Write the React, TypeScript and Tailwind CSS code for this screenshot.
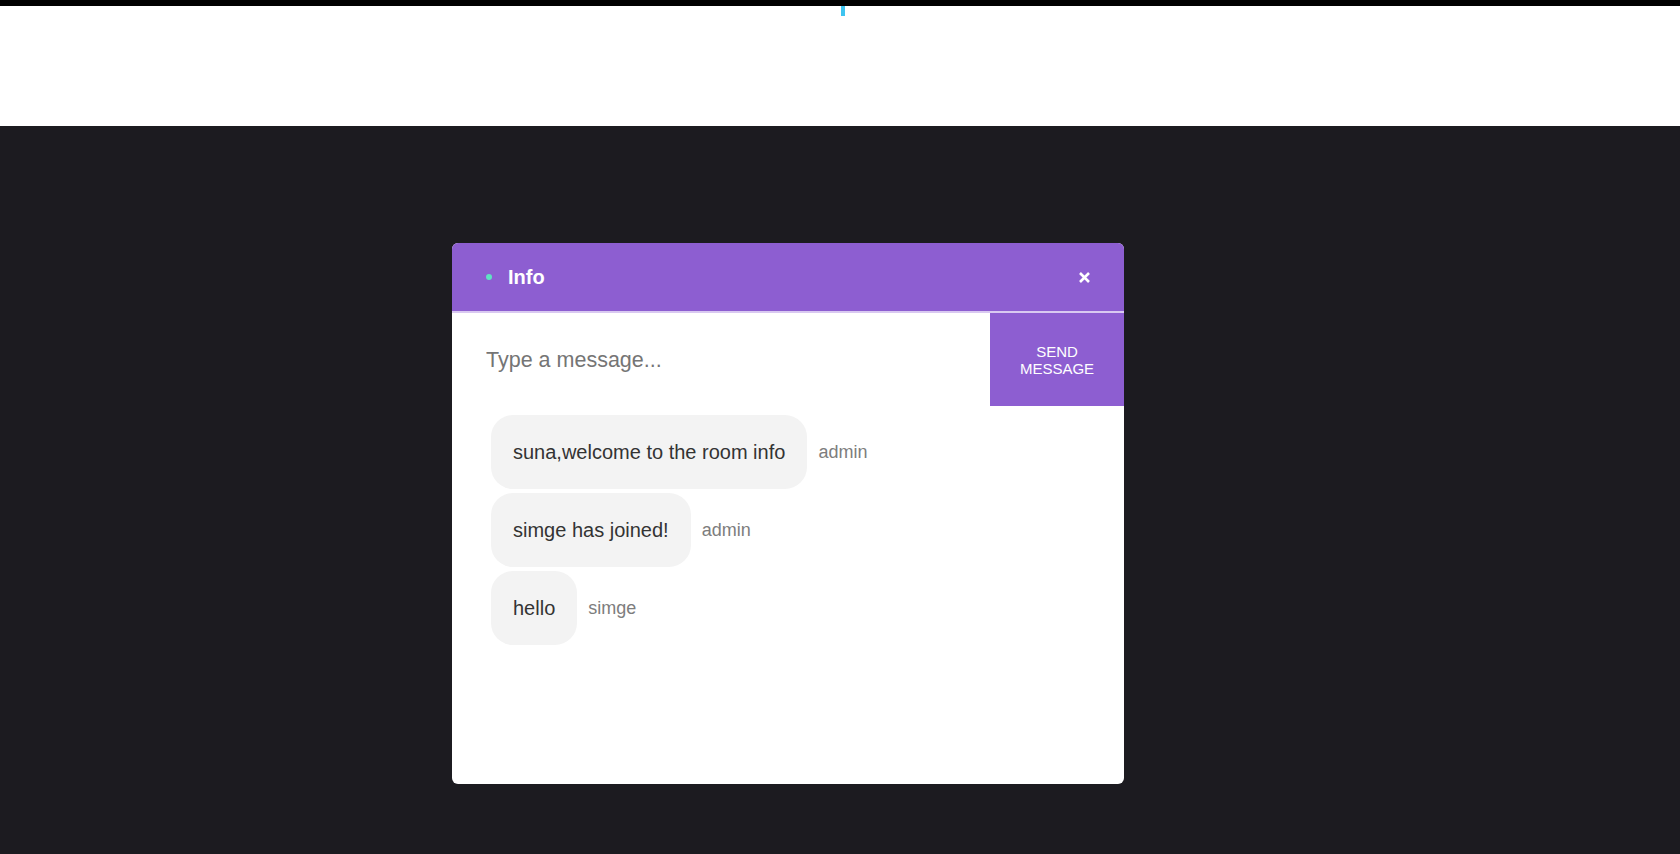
import React from 'react'

interface Message {
  text: string
  user: string
}

const messages: Message[] = [
  { text: 'suna,welcome to the room info', user: 'admin' },
  { text: 'simge has joined!', user: 'admin' },
  { text: 'hello', user: 'simge' },
]

function MessageRow({ message }: { message: Message }) {
  return (
    <div className="flex items-center gap-[11px]">
      <div className="rounded-[22px] bg-[#f3f3f3] px-[22px] py-[25px] text-[20px] leading-[24px] text-[#333333]">
        {message.text}
      </div>
      <span className="text-[18px] text-[#7d7d7d]">{message.user}</span>
    </div>
  )
}

export default function App() {
  return (
    <div className="min-h-screen bg-[#1c1b20]" style={{ fontFamily: '"Liberation Sans", Arial, sans-serif' }}>
      {/* top bar */}
      <div className="h-[126px] bg-white">
        <div className="h-[6px] bg-black" />
        <div className="ml-[841px] h-[10px] w-[4px] bg-[#3ec4f0]" />
      </div>

      <div className="pl-[452px] pt-[117px] pb-[70px]">
        <div className="flex h-[541px] w-[672px] flex-col overflow-hidden rounded-[6px] bg-white">
          {/* header */}
          <div className="flex h-[68px] shrink-0 items-center justify-between bg-[#8d5ed1] pl-[34px] pr-[34px]">
            <div className="flex items-center gap-[16px]">
              <span className="h-[6px] w-[6px] rounded-full bg-[#5fe3c2]" />
              <span className="text-[20px] font-bold text-white">Info</span>
            </div>
            <svg width="11" height="11" viewBox="0 0 11 11" className="text-white">
              <path d="M1 1 L10 10 M10 1 L1 10" stroke="currentColor" strokeWidth="2.6" strokeLinecap="butt" />
            </svg>
          </div>
          <div className="h-[2px] shrink-0 bg-[#d9c9f1]" />

          {/* input row */}
          <div className="flex h-[93px] shrink-0">
            <input
              type="text"
              placeholder="Type a message..."
              className="flex-1 bg-white pl-[34px] pt-[2px] text-[21.5px] text-[#333] outline-none placeholder:text-[#757575]"
            />
            <button className="w-[134px] bg-[#8d5ed1] text-[15px] leading-[17px] text-white">
              SEND
              <br />
              MESSAGE
            </button>
          </div>

          {/* messages */}
          <div className="flex flex-col gap-[4px] pl-[39px] pt-[9px]">
            {messages.map((m, i) => (
              <MessageRow key={i} message={m} />
            ))}
          </div>
        </div>
      </div>
    </div>
  )
}
